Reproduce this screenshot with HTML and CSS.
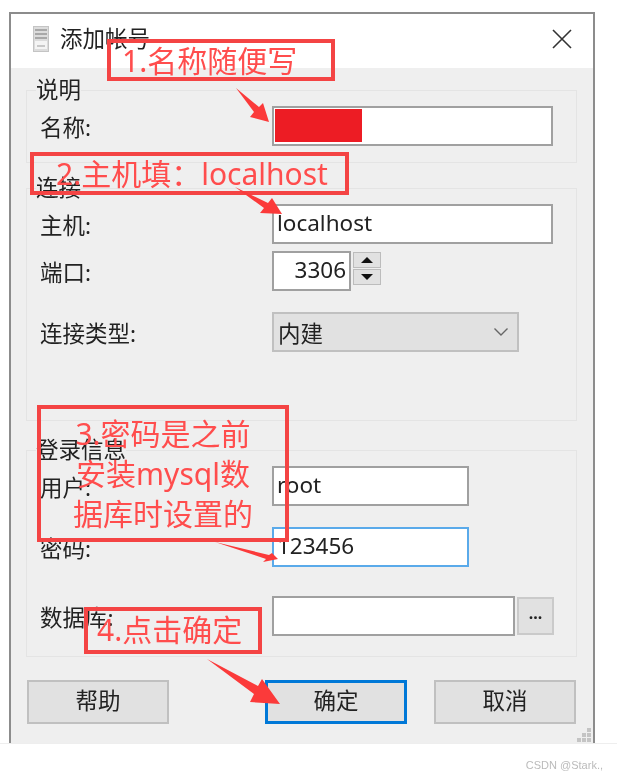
FILE: index.html
```html
<!DOCTYPE html>
<html>
<head>
    <meta charset="UTF-8">
    <title>添加帐号</title>
    <link rel="stylesheet" href="styles.css">
</head>

<body>
<div class="page">

    <!-- The dialog -->
    <div class="dialog">
        <div class="titlebar">
            <svg class="server-icon" width="16" height="26" viewBox="0 0 16 26">
                <rect x="0.5" y="0.5" width="15" height="25" fill="#dcdcdc" stroke="#c4c4c4"/>
                <rect x="2" y="3" width="12" height="2" fill="#a8a8a8"/>
                <rect x="2" y="7" width="12" height="2" fill="#a8a8a8"/>
                <rect x="2" y="11" width="12" height="2" fill="#a8a8a8"/>
                <rect x="2" y="15" width="12" height="8" fill="#f4f4f4"/>
                <rect x="4" y="19" width="8" height="2" fill="#c8c8c8"/>
            </svg>
            <span class="title">添加帐号</span>
            <svg class="close-icon" width="22" height="22" viewBox="0 0 22 22">
                <path d="M2 2 L20 20 M20 2 L2 20" stroke="#333" stroke-width="1.6" fill="none"/>
            </svg>
        </div>

        <div class="content">
            <fieldset class="group group-info">
                <legend>说明</legend>
                <div class="row">
                    <label>名称:</label>
                    <div class="field field-wide"><span class="redacted"></span></div>
                </div>
            </fieldset>

            <fieldset class="group group-conn">
                <legend>连接</legend>
                <div class="row">
                    <label>主机:</label>
                    <div class="field field-wide">localhost</div>
                </div>
                <div class="row row-near">
                    <label>端口:</label>
                    <div class="field field-port">3306</div>
                    <div class="spinner">
                        <div class="spin-btn"><span class="arrow-up"></span></div>
                        <div class="spin-btn"><span class="arrow-down"></span></div>
                    </div>
                </div>
                <div class="row row-far">
                    <label>连接类型:</label>
                    <div class="combo">
                        <span>内建</span>
                        <svg width="16" height="10" viewBox="0 0 16 10">
                            <path d="M1.5 1.5 L8 8 L14.5 1.5" stroke="#666" stroke-width="1.4" fill="none"/>
                        </svg>
                    </div>
                </div>
            </fieldset>

            <fieldset class="group group-login">
                <legend>登录信息</legend>
                <div class="row">
                    <label>用户:</label>
                    <div class="field field-mid">root</div>
                </div>
                <div class="row row-far">
                    <label>密码:</label>
                    <div class="field field-mid field-focus">123456</div>
                </div>
                <div class="row row-db">
                    <label>数据库:</label>
                    <div class="field field-db"></div>
                    <div class="browse">...</div>
                </div>
            </fieldset>

            <div class="buttons">
                <div class="btn btn-help">帮助</div>
                <div class="btn btn-ok">确定</div>
                <div class="btn">取消</div>
            </div>
        </div>

        <div class="grip">
            <i></i><i></i><i></i><i></i><i></i><i></i>
        </div>
    </div>

    <div class="footer">CSDN @Stark.,</div>

    <!-- Red notes drawn over the screenshot -->
    <div class="note note-1">1.名称随便写</div>
    <div class="note note-2">2.主机填：localhost</div>
    <div class="note note-3">3.密码是之前<br>安装mysql数<br>据库时设置的</div>
    <div class="note note-4">4.点击确定</div>

    <svg class="arrows" width="617" height="776" viewBox="0 0 617 776">
        <polygon points="236,88 259,107 263,103 269,122 250,117 254,112"/>
        <polygon points="235,187 268,203 272,198 282,214 260,213 264,208"/>
        <polygon points="215,542 269,555 272,553 278,559 263,562 266,559"/>
        <polygon points="207,659 258,686 262,679 280,704 250,702 254,694"/>
    </svg>
</div>
</body>
</html>
```

FILE: styles.css
```css
* {box-sizing: border-box;}
body {margin: 0; background: #fff; font-family: "Noto Sans", "Noto Sans CJK SC", sans-serif; font-size: 22.5px; color: #222;}

.page {position: relative; width: 617px; height: 776px; overflow: hidden; padding: 12px 0 0 9px; filter: blur(0.35px);}

.dialog {position: relative; width: 586px; height: 731px; border: 2px solid #8c8c8c; border-bottom: 0; background: #efefef;}

.titlebar {display: flex; align-items: center; height: 54px; padding: 0 20px 4px 22px; background: #fff;}
.server-icon {margin-right: 11px;}
.title {flex: 1; line-height: 32px;}

.content {padding: 0 16px 0 15px;}

.group {margin: 6px 0 0; padding: 0 13px; border: 1px solid #e4e4e4;}
.group legend {margin-left: -4px; padding: 0; line-height: 32px; height: 32px;}
.group-info {height: 89px;}
.group-conn {height: 249px; margin-top: 9px;}
.group-login {height: 223px; margin-top: 13px;}

.row {display: flex; align-items: center; height: 40px;}
.row label {width: 232px; flex: none;}
.row-near {margin-top: 7px;}
.row-far {margin-top: 21px;}
.row-db {margin-top: 29px;}

.field {height: 40px; padding: 0 3px; background: #fff; border: 2px solid #a0a0a0; line-height: 34px;}
.field-wide {width: 281px;}
.field-port {width: 79px; text-align: right;}
.field-mid {width: 197px;}
.field-db {width: 243px;}
.field-focus {border-color: #5aaaea;}

.redacted {display: block; width: 87px; height: 33px; margin: 1px 0 0 -2px; background: #ed1c24;}

.spinner {display: flex; flex-direction: column; gap: 1px; margin: -5px 0 0 2px;}
.spin-btn {display: flex; align-items: center; justify-content: center; width: 28px; height: 16px; background: #e1e1e1; border: 1px solid #bcbcbc;}
.arrow-up {border: 6px solid transparent; border-top: 0; border-bottom: 6px solid #111;}
.arrow-down {border: 6px solid transparent; border-bottom: 0; border-top: 6px solid #111;}

.combo {display: flex; align-items: center; justify-content: space-between; width: 247px; height: 40px; padding: 0 8px 0 4px; background: #e1e1e1; border: 2px solid #c0c0c0;}

.browse {width: 37px; height: 38px; margin-left: 2px; background: #e1e1e1; border: 2px solid #cacaca; text-align: center; font-size: 16px; font-weight: bold; line-height: 28px;}

.buttons {display: flex; gap: 27px; margin-top: 23px; padding-left: 1px;}
.btn {width: 142px; height: 44px; background: #e1e1e1; border: 2px solid #c0c0c0; text-align: center; line-height: 38px;}
.btn-help {margin-right: 69px;}
.btn-ok {border: 3px solid #0078d7; line-height: 36px;}

.grip {position: absolute; right: 2px; bottom: 1px; display: grid; grid-template-columns: repeat(3, 4px); gap: 1px;}
.grip i {width: 4px; height: 4px; background: #c4c4c4;}
.grip i:nth-child(1) {grid-column: 3;}
.grip i:nth-child(2) {grid-column: 2;}
.grip i:nth-child(4) {grid-column: 1;}

.footer {height: 33px; border-top: 1px solid #eee; padding-right: 14px; background: #fff; color: #bbb; font-family: "Liberation Sans", sans-serif; font-size: 11px; line-height: 42px; text-align: right; margin-left: -9px;}

.note {position: absolute; border: 4px solid #f44444; color: #ff4d4d; font-size: 30px; line-height: 36px; white-space: nowrap;}
.note-1 {left: 107px; top: 39px; width: 228px; height: 42px; padding-left: 11px;}
.note-2 {left: 30px; top: 152px; width: 319px; height: 43px; padding-left: 22px;}
.note-3 {left: 37px; top: 405px; width: 252px; height: 137px; padding-top: 5px; line-height: 40px; text-align: center;}
.note-4 {left: 84px; top: 607px; width: 178px; height: 47px; padding: 1px 0 0 9px;}

.arrows {position: absolute; left: 0; top: 0;}
.arrows polygon {fill: #fb3a3a;}
```
